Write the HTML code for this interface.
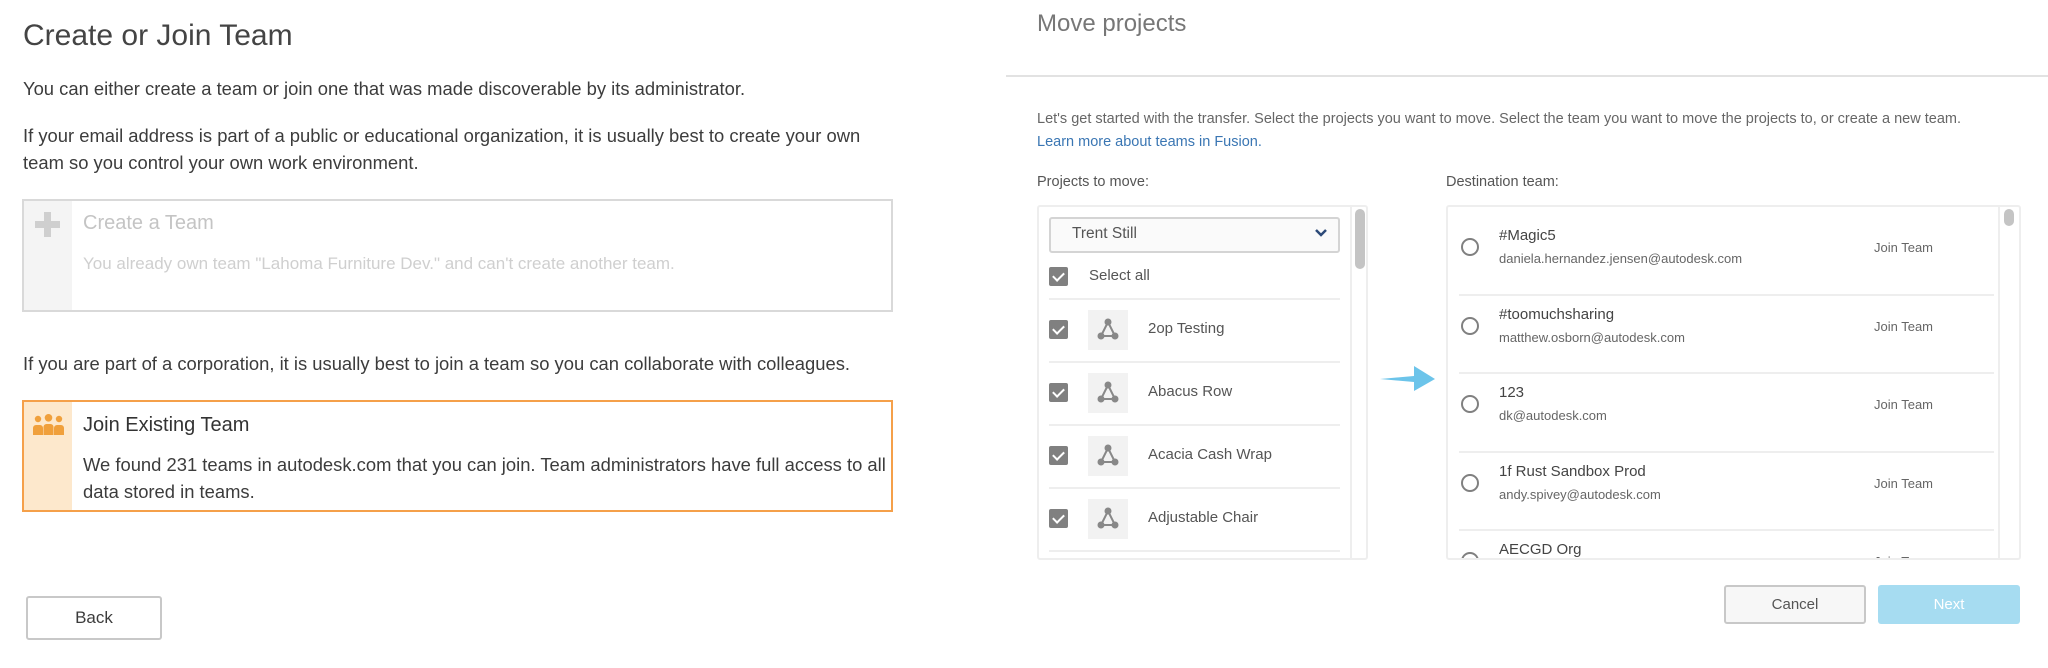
<!DOCTYPE html>
<html><head><meta charset="utf-8"><style>
*{box-sizing:border-box;margin:0;padding:0}
body{width:2048px;height:668px;background:#fff;font-family:"Liberation Sans",sans-serif;color:#3c3c3c;position:relative;overflow:hidden}
.a{position:absolute;white-space:nowrap}
.p{font-size:18.4px}
.cb{position:absolute;width:19px;height:19px;background:#808080;border-radius:2px}
.cb:after{content:"";position:absolute;left:6px;top:3px;width:5px;height:9px;border:solid #fff;border-width:0 2px 2px 0;transform:rotate(45deg)}
.ic{position:absolute;width:40px;height:40px;background:#f2f2f2}
.sep{position:absolute;height:2px;background:#eee}
.rd{position:absolute;width:18px;height:18px;border:2px solid #808080;border-radius:50%}
</style></head><body>
<div class="a" style="left:23px;top:19px;font-size:30px;color:#444">Create or Join Team</div>
<div class="a p" style="left:23px;top:78px">You can either create a team or join one that was made discoverable by its administrator.</div>
<div class="a p" style="left:23px;top:125px">If your email address is part of a public or educational organization, it is usually best to create your own</div>
<div class="a p" style="left:23px;top:152px">team so you control your own work environment.</div>
<div class="a" style="left:22px;top:199px;width:871px;height:113px;border:2px solid #d9d9d9"></div>
<div class="a" style="left:24px;top:201px;width:48px;height:109px;background:#f4f4f4"></div>
<div class="a" style="left:35px;top:221px;width:25px;height:7px;background:#cfcfcf"></div>
<div class="a" style="left:44px;top:212px;width:7px;height:25px;background:#cfcfcf"></div>
<div class="a" style="left:83px;top:212px;font-size:20px;color:#c4c4c4">Create a Team</div>
<div class="a" style="left:83px;top:254px;font-size:17px;color:#cfcfcf">You already own team "Lahoma Furniture Dev." and can't create another team.</div>
<div class="a p" style="left:23px;top:353px">If you are part of a corporation, it is usually best to join a team so you can collaborate with colleagues.</div>
<div class="a" style="left:22px;top:400px;width:871px;height:112px;border:2px solid #f5a04a"></div>
<div class="a" style="left:24px;top:402px;width:48px;height:108px;background:#fde8cc"></div>
<svg class="a" style="left:33px;top:414px" width="31" height="24" viewBox="0 0 31 24" fill="#f0a03c"><circle cx="5" cy="5" r="3.2"/><circle cx="15.5" cy="3.8" r="3.8"/><circle cx="26" cy="5" r="3.2"/><path d="M0 21v-7a3 3 0 0 1 3-3h4a3 3 0 0 1 3 3v7z"/><path d="M10.5 21v-8a3 3 0 0 1 3-3h4a3 3 0 0 1 3 3v8z"/><path d="M21 21v-7a3 3 0 0 1 3-3h4a3 3 0 0 1 3 3v7z"/></svg>
<div class="a" style="left:83px;top:414px;font-size:20px;color:#333">Join Existing Team</div>
<div class="a p" style="left:83px;top:454px">We found 231 teams in autodesk.com that you can join. Team administrators have full access to all</div>
<div class="a p" style="left:83px;top:481px">data stored in teams.</div>
<div class="a" style="left:26px;top:596px;width:136px;height:44px;border:2px solid #c8c8c8;border-radius:3px;font-size:17px;text-align:center;line-height:40px">Back</div>

<div class="a" style="left:1037px;top:10px;font-size:24px;color:#777">Move projects</div>
<div class="a" style="left:1006px;top:75px;width:1042px;height:2px;background:#e2e2e2"></div>
<div class="a" style="left:1037px;top:111px;font-size:14.5px;color:#666">Let's get started with the transfer. Select the projects you want to move. Select the team you want to move the projects to, or create a new team.</div>
<div class="a" style="left:1037px;top:134px;font-size:14.5px;color:#3a76b3">Learn more about teams in Fusion.</div>
<div class="a" style="left:1037px;top:174px;font-size:14.5px;color:#555">Projects to move:</div>
<div class="a" style="left:1446px;top:174px;font-size:14.5px;color:#555">Destination team:</div>

<div class="a" style="left:1037px;top:205px;width:331px;height:355px;border:2px solid #eee;border-radius:3px"></div>
<div class="a" style="left:1350px;top:207px;width:2px;height:351px;background:#eee"></div>
<div class="a" style="left:1355px;top:209px;width:10px;height:60px;background:#c4c4c4;border-radius:5px"></div>
<div class="a" style="left:1049px;top:217px;width:291px;height:36px;border:2px solid #d4d4d4;border-radius:3px;background:#fafafa"></div>
<div class="a" style="left:1072px;top:225px;font-size:15.5px;color:#555">Trent Still</div>
<svg class="a" style="left:1314px;top:228px" width="14" height="10"><path d="M2 2l5 5 5-5" stroke="#2d4a78" stroke-width="2.5" fill="none"/></svg>
<div class="cb" style="left:1049px;top:267px"></div>
<div class="a" style="left:1089px;top:267px;font-size:15px;color:#555">Select all</div>
<div class="sep" style="left:1049px;top:298px;width:291px"></div>
<div class="sep" style="left:1049px;top:361px;width:291px"></div>
<div class="sep" style="left:1049px;top:424px;width:291px"></div>
<div class="sep" style="left:1049px;top:487px;width:291px"></div>
<div class="sep" style="left:1049px;top:550px;width:291px"></div>

<div class="cb" style="left:1049px;top:320px"></div><div class="ic" style="left:1088px;top:310px"></div><div class="a" style="left:1148px;top:320px;font-size:15px;color:#555">2op Testing</div>
<div class="cb" style="left:1049px;top:383px"></div><div class="ic" style="left:1088px;top:373px"></div><div class="a" style="left:1148px;top:383px;font-size:15px;color:#555">Abacus Row</div>
<div class="cb" style="left:1049px;top:446px"></div><div class="ic" style="left:1088px;top:436px"></div><div class="a" style="left:1148px;top:446px;font-size:15px;color:#555">Acacia Cash Wrap</div>
<div class="cb" style="left:1049px;top:509px"></div><div class="ic" style="left:1088px;top:499px"></div><div class="a" style="left:1148px;top:509px;font-size:15px;color:#555">Adjustable Chair</div>
<svg class="a" style="left:1088px;top:310px" width="40" height="230"><g stroke="#888" stroke-width="2" fill="#888">
<g transform="translate(0,0)"><path d="M20 12L13 26H27Z" fill="none"/><circle cx="20" cy="12" r="2.5"/><circle cx="13" cy="26" r="2.5"/><circle cx="27" cy="26" r="2.5"/></g>
<g transform="translate(0,63)"><path d="M20 12L13 26H27Z" fill="none"/><circle cx="20" cy="12" r="2.5"/><circle cx="13" cy="26" r="2.5"/><circle cx="27" cy="26" r="2.5"/></g>
<g transform="translate(0,126)"><path d="M20 12L13 26H27Z" fill="none"/><circle cx="20" cy="12" r="2.5"/><circle cx="13" cy="26" r="2.5"/><circle cx="27" cy="26" r="2.5"/></g>
<g transform="translate(0,189)"><path d="M20 12L13 26H27Z" fill="none"/><circle cx="20" cy="12" r="2.5"/><circle cx="13" cy="26" r="2.5"/><circle cx="27" cy="26" r="2.5"/></g>
</g></svg>

<svg class="a" style="left:1380px;top:366px" width="56" height="26"><path d="M0 13L34 10V0L55 13L34 25V16Z" fill="#6cc4ea"/></svg>

<div class="a" style="left:1446px;top:205px;width:575px;height:355px;border:2px solid #eee;border-radius:3px"></div>
<div class="a" style="left:1998px;top:207px;width:2px;height:351px;background:#eee"></div>
<div class="a" style="left:2004px;top:209px;width:10px;height:17px;background:#c4c4c4;border-radius:5px"></div>
<div class="sep" style="left:1459px;top:294px;width:535px"></div>
<div class="sep" style="left:1459px;top:372px;width:535px"></div>
<div class="sep" style="left:1459px;top:451px;width:535px"></div>
<div class="sep" style="left:1459px;top:529px;width:535px"></div>
<div class="a" style="left:1446px;top:207px;width:552px;height:351px;overflow:hidden">
<div class="rd" style="left:15px;top:31px"></div><div class="a" style="left:53px;top:20px;font-size:15px;color:#444">#Magic5</div><div class="a" style="left:53px;top:44px;font-size:13px;color:#666">daniela.hernandez.jensen@autodesk.com</div><div class="a" style="left:428px;top:33px;font-size:13px;color:#666">Join Team</div>
<div class="rd" style="left:15px;top:110px"></div><div class="a" style="left:53px;top:99px;font-size:15px;color:#444">#toomuchsharing</div><div class="a" style="left:53px;top:123px;font-size:13px;color:#666">matthew.osborn@autodesk.com</div><div class="a" style="left:428px;top:112px;font-size:13px;color:#666">Join Team</div>
<div class="rd" style="left:15px;top:188px"></div><div class="a" style="left:53px;top:177px;font-size:15px;color:#444">123</div><div class="a" style="left:53px;top:201px;font-size:13px;color:#666">dk@autodesk.com</div><div class="a" style="left:428px;top:190px;font-size:13px;color:#666">Join Team</div>
<div class="rd" style="left:15px;top:267px"></div><div class="a" style="left:53px;top:256px;font-size:15px;color:#444">1f Rust Sandbox Prod</div><div class="a" style="left:53px;top:280px;font-size:13px;color:#666">andy.spivey@autodesk.com</div><div class="a" style="left:428px;top:269px;font-size:13px;color:#666">Join Team</div>
<div class="rd" style="left:15px;top:345px"></div><div class="a" style="left:53px;top:334px;font-size:15px;color:#444">AECGD Org</div><div class="a" style="left:428px;top:347px;font-size:13px;color:#666">Join Team</div>
</div>

<div class="a" style="left:1724px;top:585px;width:142px;height:39px;border:2px solid #c8c8c8;border-radius:3px;background:#f7f7f7;font-size:15px;text-align:center;line-height:35px;color:#555">Cancel</div>
<div class="a" style="left:1878px;top:585px;width:142px;height:39px;border-radius:3px;background:#a6dcf1;font-size:15px;text-align:center;line-height:39px;color:#fff">Next</div>
</body></html>
